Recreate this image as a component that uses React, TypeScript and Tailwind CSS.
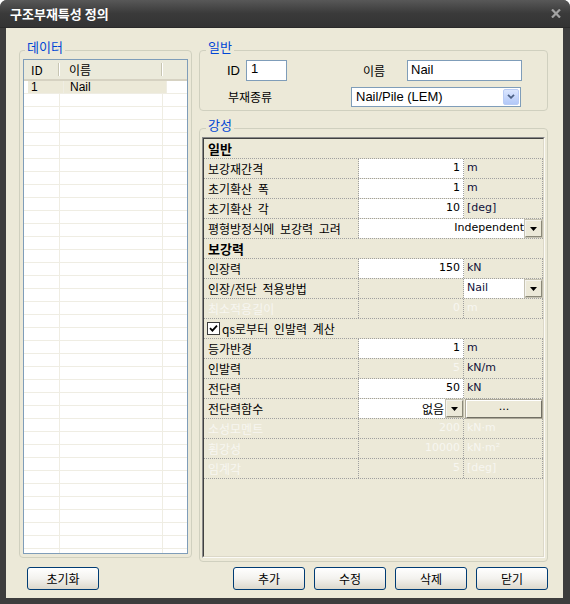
import React from "react";

const KR = "font-['Noto_Sans_CJK_KR',sans-serif]";
const LAT = "font-['DejaVu_Sans','Noto_Sans_CJK_KR',sans-serif]";
const ARIAL = "font-['Liberation_Sans','Noto_Sans_CJK_KR',sans-serif]";

const DIS = "text-[#f7f6f0]";

function DropBtn() {
  return (
    <div className="w-[17px] h-[17px] shrink-0 bg-[#ECE9D8] border border-t-[#f4f3ee] border-l-[#f4f3ee] border-r-[#8a8878] border-b-[#8a8878] outline outline-1 outline-[#c5c2b2] flex items-center justify-center">
      <svg width="7" height="4" viewBox="0 0 7 4">
        <path d="M0 0h7L3.5 4z" fill="#000" />
      </svg>
    </div>
  );
}

const rowBase = "h-[20px] shrink-0 flex border-b border-dotted border-[#a0a0a0]";
const labelCell = "w-[155px] shrink-0 h-full border-r border-dotted border-[#a0a0a0] pl-[4px] flex items-center text-[12px] whitespace-nowrap [word-spacing:3px]";
const valueCell = "w-[105px] shrink-0 h-full border-r border-dotted border-[#a0a0a0] flex items-center justify-end pr-[3px] text-[11px]";
const unitCell = "flex-1 h-full border-r border-dotted border-[#a0a0a0] flex items-center pl-[3px] text-[11px]";

function Prop({
  label,
  value,
  unit,
  disabled,
  valueDisabled,
}: {
  label: string;
  value: string;
  unit: string;
  disabled?: boolean;
  valueDisabled?: boolean;
}) {
  const vd = disabled || valueDisabled;
  return (
    <div className={rowBase}>
      <div className={`${labelCell} ${KR} ${disabled ? DIS : "text-black"}`}>{label}</div>
      <div className={`${valueCell} ${LAT} ${vd ? DIS : "bg-white text-black"}`}>{value}</div>
      <div className={`${unitCell} ${LAT} ${disabled ? DIS : "text-[#10103a]"}`}>{unit}</div>
    </div>
  );
}

function Category({ label }: { label: string }) {
  return (
    <div className={rowBase}>
      <div className={`pl-[4px] flex items-center font-bold text-[13px] text-black ${KR}`}>{label}</div>
    </div>
  );
}

function XPButton({ label, w = "w-[72px]" }: { label: string; w?: string }) {
  return (
    <div
      className={`${w} h-[23px] rounded-[3px] border border-[#003C74] bg-linear-to-b from-[#ffffff] via-[#f3f2ee] to-[#dcd8cc] flex items-center justify-center text-[12px] text-black ${KR}`}
    >
      {label}
    </div>
  );
}

export default function App() {
  const listRows = Array.from({ length: 37 });
  return (
    <div className="w-[570px] h-[604px] bg-white">
      <div className="w-[570px] h-[604px] bg-[#3d3d3d] rounded-t-[7px] flex flex-col overflow-hidden">
        {/* Title bar */}
        <div className="h-[28px] shrink-0 flex items-center justify-between pl-[10px] pr-[9px] bg-linear-to-b from-[#585858] via-[#3a3a3a] to-[#333333] border-b border-[#2a2a2a]">
          <span className={`text-white font-bold text-[13px] leading-none ${KR}`}>구조부재특성 정의</span>
          <svg width="10" height="9" viewBox="0 0 10 9">
            <path d="M1 0.5L9 8.5M9 0.5L1 8.5" stroke="#a3a3a3" strokeWidth="2.2" />
          </svg>
        </div>

        {/* Body */}
        <div className="flex-1 ml-[6px] mr-[7px] mb-[6px] bg-[#ECE9D8] flex flex-col pt-[13px] pl-[13px] pr-[15px]">
          <div className="flex gap-[7px] items-start">
            {/* Left group */}
            <fieldset className="w-[173px] border border-[#D0D0BF] rounded-[4px] px-[3px] pb-[3px]">
              <legend className={`ml-[2px] px-[2px] text-[13px] leading-[12px] pb-[6px] text-[#0046D5] ${KR}`}>데이터</legend>
              <div className="h-[495px] border border-[#7F9DB9] bg-white flex flex-col overflow-hidden">
                {/* header */}
                <div className={`h-[21px] shrink-0 bg-[#EBEADB] border-b-2 border-[#D6D2C2] flex items-center text-[12px] text-black ${KR}`}>
                  <div className="w-[34px] shrink-0 pl-[7px]">ID</div>
                  <div className="w-[2px] h-[13px] border-l border-[#c7c5b2] border-r border-r-white" />
                  <div className="w-[101px] shrink-0 pl-[9px]">이름</div>
                  <div className="w-[2px] h-[13px] border-l border-[#c7c5b2] border-r border-r-white" />
                  <div className="flex-1" />
                </div>
                {listRows.map((_, i) => (
                  <div key={i} className="h-[13px] shrink-0 flex border-b border-[#EFEDE3] text-[12px] leading-[12px] text-black">
                    <div className={`w-[36px] shrink-0 h-full border-r border-[#EFEDE3] ${i === 0 ? "ml-[4px] w-[32px] bg-[#ECE9D8]" : ""} pl-[3px] ${ARIAL}`}>
                      {i === 0 ? "1" : ""}
                    </div>
                    <div className={`w-[103px] shrink-0 h-full border-r border-[#EFEDE3] ${i === 0 ? "bg-[#ECE9D8]" : ""} pl-[6px] ${ARIAL}`}>
                      {i === 0 ? "Nail" : ""}
                    </div>
                    <div className="flex-1" />
                  </div>
                ))}
              </div>
            </fieldset>

            {/* Right column */}
            <div className="w-[349px] flex flex-col gap-[8px]">
              <fieldset className="border border-[#D0D0BF] rounded-[4px] pb-[4px] pt-[1px]">
                <legend className={`ml-[6px] px-[2px] text-[13px] leading-[12px] pb-[6px] text-[#0046D5] ${KR}`}>일반</legend>
                <div className="flex flex-col gap-[6px]">
                  <div className="h-[21px] flex items-center">
                    <div className={`ml-[27px] w-[19px] text-[13px] text-black ${ARIAL}`}>ID</div>
                    <div className={`w-[41px] h-[21px] border border-[#7F9DB9] bg-white pl-[4px] text-[13px] leading-[15px] text-black ${ARIAL}`}>1</div>
                    <div className={`ml-[76px] w-[44px] text-[12px] text-black ${KR}`}>이름</div>
                    <div className={`w-[115px] h-[21px] border border-[#7F9DB9] bg-white pl-[3px] text-[13px] leading-[17px] text-black ${ARIAL}`}>Nail</div>
                  </div>
                  <div className="h-[19px] flex items-center">
                    <div className={`ml-[28px] w-[123px] text-[12px] text-black ${KR}`}>부재종류</div>
                    <div className="w-[170px] h-[20px] border border-[#7F9DB9] bg-white flex items-center">
                      <div className={`flex-1 pl-[4px] text-[13px] text-black ${ARIAL}`}>Nail/Pile (LEM)</div>
                      <div className="w-[16px] h-[16px] mr-[1px] rounded-[2px] border border-[#B9CCF5] bg-linear-to-b from-[#dbe6fe] to-[#b2c8f8] flex items-center justify-center">
                        <svg width="8" height="5" viewBox="0 0 8 5">
                          <path d="M1 0.8L4 3.8L7 0.8" stroke="#4D6185" strokeWidth="1.8" fill="none" />
                        </svg>
                      </div>
                    </div>
                  </div>
                </div>
              </fieldset>

              <fieldset className="border border-[#D0D0BF] rounded-[4px] px-[2px] pb-[3px]">
                <legend className={`ml-[4px] px-[2px] text-[13px] leading-[12px] pb-[6px] text-[#0046D5] ${KR}`}>강성</legend>
                <div className="h-[421px] border border-t-[#8a8a8a] border-l-[#8a8a8a] border-r-[#fbfaf6] border-b-[#fbfaf6]">
                  <div className="h-full border border-t-[#404040] border-l-[#404040] border-r-[#dcd8c8] border-b-[#dcd8c8] flex flex-col">
                    <Category label="일반" />
                    <Prop label="보강재간격" value="1" unit="m" />
                    <Prop label="초기확산 폭" value="1" unit="m" />
                    <Prop label="초기확산 각" value="10" unit="[deg]" />
                    <div className={rowBase}>
                      <div className={`${labelCell} ${KR} text-black`}>평형방정식에 보강력 고려</div>
                      <div className="flex-1 h-full border-r border-dotted border-[#a0a0a0] flex items-center">
                        <div className={`flex-1 h-full bg-white flex items-center justify-end pr-[1px] text-[11px] text-black ${LAT}`}>Independent</div>
                        <DropBtn />
                      </div>
                    </div>
                    <Category label="보강력" />
                    <Prop label="인장력" value="150" unit="kN" />
                    <div className={rowBase}>
                      <div className={`${labelCell} ${KR} text-black`}>인장/전단 적용방법</div>
                      <div className={`${valueCell}`} />
                      <div className="flex-1 h-full border-r border-dotted border-[#a0a0a0] flex items-center">
                        <div className={`flex-1 h-full bg-white flex items-center pl-[3px] text-[11px] text-[#10103a] ${LAT}`}>Nail</div>
                        <DropBtn />
                      </div>
                    </div>
                    <Prop label="최소적용길이" value="0" unit="m" disabled />
                    <div className={rowBase}>
                      <div className={`pl-[3px] flex items-center gap-[2px] text-[12px] text-black ${KR} [word-spacing:3px]`}>
                        <div className="w-[13px] h-[13px] border border-[#3c3c3c] bg-white flex items-center justify-center">
                          <svg width="9" height="9" viewBox="0 0 9 9">
                            <path d="M1 4.2L3.4 6.6L8 1.6" stroke="#000" strokeWidth="1.8" fill="none" />
                          </svg>
                        </div>
                        <span>qs로부터 인발력 계산</span>
                      </div>
                    </div>
                    <Prop label="등가반경" value="1" unit="m" />
                    <Prop label="인발력" value="5" unit="kN/m" valueDisabled />
                    <Prop label="전단력" value="50" unit="kN" />
                    <div className={rowBase}>
                      <div className={`${labelCell} ${KR} text-black`}>전단력함수</div>
                      <div className="w-[105px] shrink-0 h-full border-r border-dotted border-[#a0a0a0] flex items-center">
                        <div className={`flex-1 h-full bg-white flex items-center justify-end pr-[2px] text-[12px] text-black ${KR}`}>없음</div>
                        <DropBtn />
                      </div>
                      <div className="flex-1 h-full border-r border-dotted border-[#a0a0a0] flex items-center pl-[2px]">
                        <div className={`flex-1 h-[18px] bg-[#ECE9D8] border border-t-white border-l-white border-r-[#716F64] border-b-[#716F64] outline outline-1 outline-[#aca899] flex items-center justify-center text-[11px] text-black leading-none pb-[4px] ${LAT}`}>
                          ...
                        </div>
                      </div>
                    </div>
                    <Prop label="소성모멘트" value="200" unit="kN·m" disabled />
                    <Prop label="휨강성" value="10000" unit="kN·m²" disabled />
                    <Prop label="임계각" value="5" unit="[deg]" disabled />
                  </div>
                </div>
              </fieldset>
            </div>
          </div>

          {/* Buttons */}
          <div className="flex items-center mt-[5px]">
            <div className="ml-[8px]">
              <XPButton label="초기화" />
            </div>
            <div className="flex-1" />
            <div className="flex gap-[9px]">
              <XPButton label="추가" />
              <XPButton label="수정" />
              <XPButton label="삭제" />
              <XPButton label="닫기" />
            </div>
          </div>
        </div>
      </div>
    </div>
  );
}
